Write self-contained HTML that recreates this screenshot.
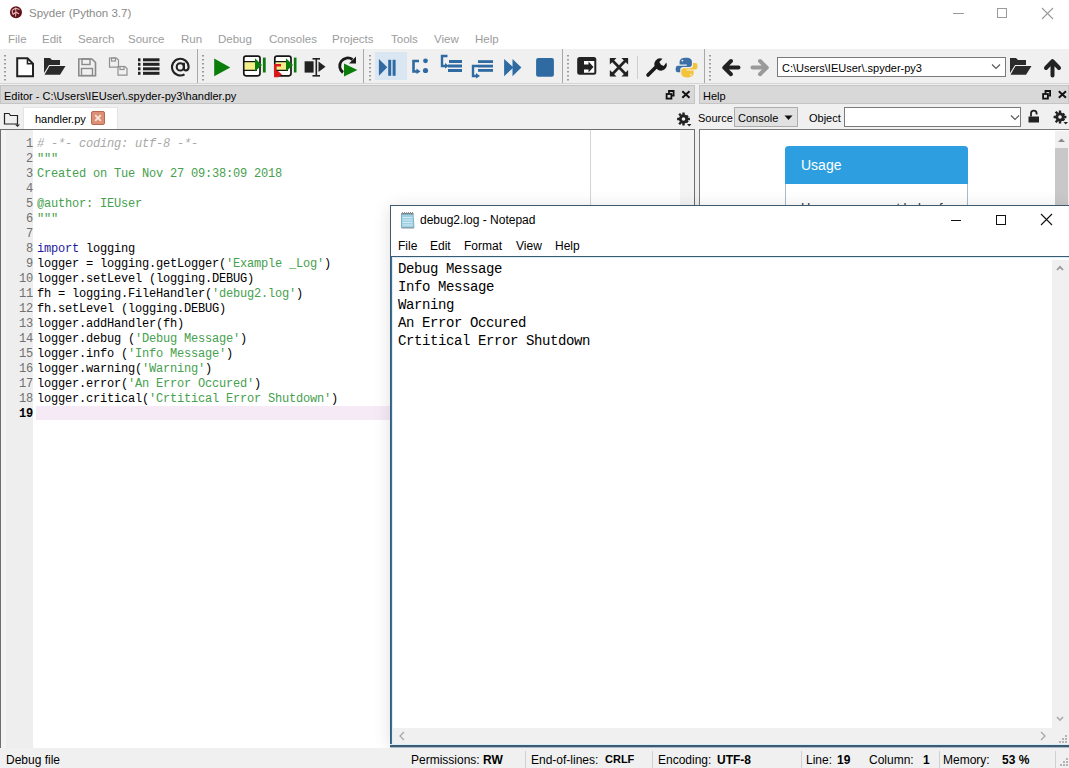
<!DOCTYPE html>
<html><head><meta charset="utf-8">
<style>
*{margin:0;padding:0;box-sizing:border-box}
html,body{width:1069px;height:768px;overflow:hidden;background:#fff;font-family:"Liberation Sans",sans-serif;font-size:11px;color:#000}
.a{position:absolute;white-space:pre}
.mono{font-family:"Liberation Mono",monospace}
.code,.nums{font-size:12px;letter-spacing:-0.2px;line-height:15px}
.nums{color:#707070}
.s{color:#46a04e}.c{color:#a8a8a8;font-style:italic}.k{color:#1c1c9c}
.np{font-size:14px;letter-spacing:-0.4px;line-height:18px}
</style></head><body>
<!-- title bar -->
<div class="a" style="left:0;top:0;width:1069px;height:28px;background:#fff"></div>
<svg class="a" style="left:9px;top:5px" width="14" height="14" viewBox="0 0 14 14"><circle cx="7" cy="7.2" r="6" fill="#5e1418"/><path d="M3 5.5 L6.5 3 L10.5 4.5 M4 9.5 L7 7 L10 9 M6.5 3 L7 7 L6.5 11.5 M3 5.5 L4 9.5" fill="none" stroke="#e9b5b8" stroke-width="1.1"/></svg>
<div class="a" style="left:29px;top:7px;font-size:11.5px;color:#8a8a8a">Spyder (Python 3.7)</div>
<div class="a" style="left:953px;top:13px;width:11px;height:1px;background:#9a9a9a"></div>
<div class="a" style="left:997px;top:8px;width:10px;height:10px;border:1px solid #9a9a9a"></div>
<svg class="a" style="left:1041px;top:7px" width="13" height="13" viewBox="0 0 13 13"><path d="M1 1L12 12M12 1L1 12" stroke="#9a9a9a" stroke-width="1.1"/></svg>

<!-- menu bar -->
<div class="a" style="left:8px;top:33px;color:#9c9c9c;font-size:11.5px">File</div>
<div class="a" style="left:42px;top:33px;color:#9c9c9c;font-size:11.5px">Edit</div>
<div class="a" style="left:78px;top:33px;color:#9c9c9c;font-size:11.5px">Search</div>
<div class="a" style="left:128px;top:33px;color:#9c9c9c;font-size:11.5px">Source</div>
<div class="a" style="left:181px;top:33px;color:#9c9c9c;font-size:11.5px">Run</div>
<div class="a" style="left:218px;top:33px;color:#9c9c9c;font-size:11.5px">Debug</div>
<div class="a" style="left:269px;top:33px;color:#9c9c9c;font-size:11.5px">Consoles</div>
<div class="a" style="left:332px;top:33px;color:#9c9c9c;font-size:11.5px">Projects</div>
<div class="a" style="left:391px;top:33px;color:#9c9c9c;font-size:11.5px">Tools</div>
<div class="a" style="left:434px;top:33px;color:#9c9c9c;font-size:11.5px">View</div>
<div class="a" style="left:475px;top:33px;color:#9c9c9c;font-size:11.5px">Help</div>

<div class="a" style="left:0;top:84px;width:1069px;height:684px;background:#f0f0f0"></div>
<!-- toolbar -->
<div class="a" style="left:0;top:49px;width:1069px;height:35px;background:#f0f0f0;border-bottom:1px solid #d4d4d4"></div>

<svg class="a" style="left:0;top:0" width="1069" height="130" viewBox="0 0 1069 130">
<!-- separators -->
<g fill="#a8a8a8"><rect x="197" y="49" width="1" height="34"/><rect x="363" y="49" width="1" height="34"/><rect x="562" y="49" width="1" height="34"/><rect x="704" y="49" width="1" height="34"/></g>
<rect x="637" y="56" width="1" height="23" fill="#cfcfcf"/>
<!-- grips -->
<g fill="#9a9a9a">
<rect x="4" y="55" width="2" height="1.5"/><rect x="4" y="59" width="2" height="1.5"/><rect x="4" y="63" width="2" height="1.5"/><rect x="4" y="67" width="2" height="1.5"/><rect x="4" y="71" width="2" height="1.5"/><rect x="4" y="75" width="2" height="1.5"/><rect x="4" y="79" width="2" height="1.5"/>
<rect x="202" y="55" width="2" height="1.5"/><rect x="202" y="59" width="2" height="1.5"/><rect x="202" y="63" width="2" height="1.5"/><rect x="202" y="67" width="2" height="1.5"/><rect x="202" y="71" width="2" height="1.5"/><rect x="202" y="75" width="2" height="1.5"/><rect x="202" y="79" width="2" height="1.5"/>
<rect x="369" y="55" width="2" height="1.5"/><rect x="369" y="59" width="2" height="1.5"/><rect x="369" y="63" width="2" height="1.5"/><rect x="369" y="67" width="2" height="1.5"/><rect x="369" y="71" width="2" height="1.5"/><rect x="369" y="75" width="2" height="1.5"/><rect x="369" y="79" width="2" height="1.5"/>
<rect x="567" y="55" width="2" height="1.5"/><rect x="567" y="59" width="2" height="1.5"/><rect x="567" y="63" width="2" height="1.5"/><rect x="567" y="67" width="2" height="1.5"/><rect x="567" y="71" width="2" height="1.5"/><rect x="567" y="75" width="2" height="1.5"/><rect x="567" y="79" width="2" height="1.5"/>
<rect x="709" y="55" width="2" height="1.5"/><rect x="709" y="59" width="2" height="1.5"/><rect x="709" y="63" width="2" height="1.5"/><rect x="709" y="67" width="2" height="1.5"/><rect x="709" y="71" width="2" height="1.5"/><rect x="709" y="75" width="2" height="1.5"/><rect x="709" y="79" width="2" height="1.5"/>
</g>
<!-- new file -->
<path d="M17.2 58.2 H27.5 L33 63.7 V76.3 H17.2 Z" fill="#fff" stroke="#222" stroke-width="2"/>
<path d="M27.5 58.2 V63.7 H33" fill="none" stroke="#222" stroke-width="1.6"/>
<!-- open folder -->
<path d="M44 58 H50 L52 60 H60 V65 H49 L44 73 Z" fill="#2a2a2a"/>
<path d="M49.5 66 H65.5 L60 74.7 H44.5 Z" fill="#2a2a2a"/>
<!-- save (grey) -->
<path d="M78.8 59 H92 L95.5 62.5 V75.7 H78.8 Z" fill="none" stroke="#8a8a8a" stroke-width="1.6"/>
<rect x="82" y="59" width="8" height="5.5" fill="none" stroke="#8a8a8a" stroke-width="1.4"/>
<rect x="81.5" y="68.5" width="11" height="7" fill="none" stroke="#8a8a8a" stroke-width="1.4"/>
<!-- save all -->
<g fill="none" stroke="#909090" stroke-width="1.2">
<path d="M109.5 58 H116.5 L118.5 60 V67.2 H109.5 Z"/><rect x="111.5" y="58" width="4" height="3"/>
<path d="M118 66.5 H125 L127 68.5 V75.2 H118 Z"/><rect x="120" y="66.5" width="4" height="3"/>
</g>
<!-- list -->
<g fill="#222"><rect x="138" y="58.3" width="2.5" height="3"/><rect x="143" y="58.3" width="16.5" height="3"/>
<rect x="138" y="62.8" width="2.5" height="3"/><rect x="143" y="62.8" width="16.5" height="3"/>
<rect x="138" y="67.3" width="2.5" height="3"/><rect x="143" y="67.3" width="16.5" height="3"/>
<rect x="138" y="71.8" width="2.5" height="3"/><rect x="143" y="71.8" width="16.5" height="3"/></g>
<!-- @ -->
<circle cx="180.3" cy="66.9" r="3.6" stroke="#222" stroke-width="2.1" fill="none"/><path d="M183.9 62.8 V68.8 C183.9 71.2 188.6 71.2 188.6 66.9 A8.3 8.3 0 1 0 184.5 74.3" stroke="#222" stroke-width="2.1" fill="none"/>
<!-- play -->
<path d="M214.2 58.6 L230.3 67.4 L214.2 76.2 Z" fill="#0a7d0a"/>
<!-- run cell -->
<rect x="243.8" y="56.1" width="16.2" height="19.7" rx="2.2" fill="#fff" stroke="#151515" stroke-width="1.7"/>
<rect x="244.8" y="62.2" width="11" height="7.8" fill="#f3ef86"/>
<path d="M243.5 61.6 H257 M243.5 70.4 H257" stroke="#151515" stroke-width="1.3"/>
<path d="M255 58.3 L262 65 L255 71.5 Z" fill="#0c7a0c"/><rect x="262.9" y="57.6" width="2.8" height="14.9" fill="#0c7a0c"/>
<!-- run cell advance -->
<rect x="274.8" y="56.1" width="16.2" height="19.7" rx="2.2" fill="#fff" stroke="#151515" stroke-width="1.7"/>
<rect x="275.8" y="62.2" width="11" height="7.8" fill="#f3ef86"/>
<path d="M274.5 61.6 H288 M274.5 70.4 H288" stroke="#151515" stroke-width="1.3"/>
<path d="M286 58.3 L293 65 L286 71.5 Z" fill="#0c7a0c"/><rect x="293.9" y="57.6" width="2.6" height="14.9" fill="#0c7a0c"/>
<path d="M274 63.9 H281 V66.4 H276.6 V72 H274 Z" fill="#d81a1a"/><path d="M274 71 H278 L282 74.5 L278 77.3 H274 Z" fill="#d81a1a"/>
<!-- run selection -->
<rect x="304.6" y="61.3" width="9" height="11.3" fill="#222"/>
<rect x="315.5" y="58.5" width="1.6" height="17.5" fill="#222"/><rect x="312.5" y="58" width="7.5" height="1.6" fill="#222"/><rect x="312.5" y="75" width="7.5" height="1.6" fill="#222"/>
<path d="M318.5 61.5 L325.5 66.8 L318.5 72 Z" fill="#222"/>
<!-- rerun -->
<path d="M343 72.5 A8 8 0 0 1 352.5 59.5" fill="none" stroke="#1a1a1a" stroke-width="2.8"/>
<path d="M356 56.5 V63.5 H349 Z" fill="#1a1a1a"/>
<path d="M344 63.6 L357.4 70 L344 76.4 Z" fill="#0a7d0a"/>
<!-- debug highlight -->
<rect x="375" y="52" width="32" height="28" fill="#dae6f2"/>
<g fill="#2f6aa3">
<path d="M378.9 58.9 L387.3 67.35 L378.9 75.8 Z"/><rect x="388.2" y="59.8" width="3" height="16"/><rect x="392.6" y="59.8" width="3" height="16"/>
<!-- step -->
<path d="M419 61 H413.5 V71.5 H417" fill="none" stroke="#2f6aa3" stroke-width="2.6"/><path d="M416.5 68.5 L420.5 71.5 L416.5 74 Z"/>
<circle cx="425.5" cy="60.8" r="2.4"/><circle cx="425.5" cy="70.5" r="2.6"/>
<!-- step into -->
<path d="M447.5 56 H442 V66 H446" fill="none" stroke="#2f6aa3" stroke-width="2.4"/><path d="M445 63 L449 66 L445 68.5 Z"/>
<rect x="449" y="60" width="13" height="3"/><rect x="448" y="64.5" width="14" height="3"/><rect x="448" y="69" width="14" height="3"/>
<!-- step return -->
<rect x="478" y="60.2" width="15" height="2.8"/><rect x="478" y="64.7" width="15" height="2.8"/><rect x="478" y="69" width="15" height="2.8"/>
<path d="M478.5 66 H473 V76 H477" fill="none" stroke="#2f6aa3" stroke-width="2.4"/><path d="M476 73 L480 76 L476 78.5 Z"/>
<!-- continue -->
<path d="M504.1 58.9 L513.5 67.5 L504.1 76.2 Z"/><path d="M512.5 58.9 L521.4 67.5 L512.5 76.2 Z"/>
<!-- stop -->
<rect x="536.1" y="58" width="17.8" height="18.7" rx="2"/>
</g>
<!-- maximize pane -->
<rect x="578.2" y="58.1" width="17.1" height="15.6" rx="1.5" fill="#fff" stroke="#222" stroke-width="2"/>
<rect x="578" y="58" width="17.5" height="3" fill="#222"/>
<rect x="578" y="61" width="6" height="13" fill="#222"/>
<path d="M583 64.5 H588.5 V61.5 L593.5 67 L588.5 72.5 V69.5 H583 Z" fill="#222"/>
<!-- fullscreen -->
<g stroke="#222" stroke-width="2.6" fill="none"><path d="M612 60 L626 74.5 M626 60 L612 74.5"/></g>
<g fill="#222"><path d="M609.8 57.9 H616.5 L609.8 64.6 Z"/><path d="M628.1 57.9 H621.4 L628.1 64.6 Z"/><path d="M609.8 76.6 H616.5 L609.8 69.9 Z"/><path d="M628.1 76.6 H621.4 L628.1 69.9 Z"/></g>
<!-- wrench -->
<path d="M648 75 L657 66" stroke="#1a1a1a" stroke-width="3.6" stroke-linecap="round"/>
<path d="M655.5 67.5 A5.8 5.8 0 0 1 662.5 58.8 L659.3 62 L661 64.7 L663.8 66 L666.3 62.6 A5.8 5.8 0 0 1 657.8 69.7 Z" fill="#1a1a1a"/>
<!-- python -->
<path id="py1" d="M686.5 57.8 C681.8 57.8 679.6 59.3 679.6 62 V64.6 H686.8 V65.8 H677.6 C675.2 65.8 674.8 72.3 677.6 72.3 H680.2 V69.6 C680.2 67.9 681.4 66.9 683.2 66.9 H689.4 C690.8 66.9 691.9 65.9 691.9 64.4 V61.6 C691.9 59.2 689.6 57.8 686.5 57.8 Z" fill="#3b6fa6"/>
<circle cx="682.4" cy="60.6" r="0.9" fill="#f0f0f0"/>
<path d="M686.5 57.8 C681.8 57.8 679.6 59.3 679.6 62 V64.6 H686.8 V65.8 H677.6 C675.2 65.8 674.8 72.3 677.6 72.3 H680.2 V69.6 C680.2 67.9 681.4 66.9 683.2 66.9 H689.4 C690.8 66.9 691.9 65.9 691.9 64.4 V61.6 C691.9 59.2 689.6 57.8 686.5 57.8 Z" fill="#f3c43a" transform="rotate(180 686.6 67.6)"/>
<circle cx="690.8" cy="74.6" r="0.9" fill="#f0f0f0"/>
<!-- back -->
<path d="M738.5 67.6 H725 M731 61 L724.2 67.6 L731 74.2" fill="none" stroke="#222" stroke-width="4" stroke-linecap="round" stroke-linejoin="round"/>
<!-- forward -->
<path d="M752.5 67.6 H766 M760 61 L766.8 67.6 L760 74.2" fill="none" stroke="#9a9a9a" stroke-width="4" stroke-linecap="round" stroke-linejoin="round"/>
<!-- folder2 -->
<path d="M1010 58 H1016 L1018 60 H1026 V65 H1015 L1010 73 Z" fill="#2a2a2a"/>
<path d="M1015.5 66 H1031.5 L1026 74.7 H1010.5 Z" fill="#2a2a2a"/>
<!-- up -->
<path d="M1052.5 75.5 V62 M1046 68 L1052.5 61.2 L1059 68" fill="none" stroke="#222" stroke-width="4" stroke-linecap="round" stroke-linejoin="round"/>
</svg>
<div class="a" style="left:777px;top:57px;width:229px;height:20px;background:#fff;border:1px solid #7a7a7a"></div>
<div class="a" style="left:782px;top:62px;font-size:11px">C:\Users\IEUser\.spyder-py3</div>
<svg class="a" style="left:991px;top:63px" width="10" height="7" viewBox="0 0 10 7"><path d="M1 1.5 L5 5.5 L9 1.5" fill="none" stroke="#555" stroke-width="1.1"/></svg>
<!-- dock headers -->
<div class="a" style="left:0;top:85px;width:695px;height:19px;background:#d8d8d8;border:1px solid #c4c4c4"></div>
<div class="a" style="left:4px;top:90px;color:#000">Editor - C:\Users\IEUser\.spyder-py3\handler.py</div>
<div class="a" style="left:699px;top:85px;width:370px;height:19px;background:#d8d8d8;border:1px solid #c4c4c4"></div>
<div class="a" style="left:703px;top:90px;color:#000">Help</div>

<!-- tab bar -->
<div class="a" style="left:0;top:104px;width:699px;height:26px;background:#f0f0f0"></div>
<div class="a" style="left:23px;top:107px;width:95px;height:23px;background:#fff;border:1px solid #e4e4e4;border-bottom:none"></div>
<div class="a" style="left:35px;top:113px;color:#000;font-size:11px">handler.py</div>

<!-- editor -->
<div class="a" style="left:0;top:129px;width:695px;height:620px;border:1px solid #6e6e6e;background:#fff"></div>
<div class="a" style="left:1px;top:130px;width:32px;height:618px;background:#eeeeee"></div>
<div class="a" style="left:1px;top:130px;width:5px;height:618px;background:#f3f3f3"></div>

<div class="a" style="left:36px;top:406px;width:644px;height:14px;background:#f6eaf7"></div>
<div class="a" style="left:590px;top:130px;width:1px;height:618px;background:#d4d4d4"></div>
<div class="a mono nums" style="left:1px;top:137px;width:32px;text-align:right">1
2
3
4
5
6
7
8
9
10
11
12
13
14
15
16
17
18
<b style="color:#000">19</b></div>
<div class="a mono code" style="left:37px;top:137px"><span class="c"># -*- coding: utf-8 -*-</span>
<span class="s">"""</span>
<span class="s">Created on Tue Nov 27 09:38:09 2018</span>

<span class="s">@author: IEUser</span>
<span class="s">"""</span>

<span class="k">import</span> logging
logger = logging.getLogger(<span class="s">'Example _Log'</span>)
logger.setLevel (logging.DEBUG)
fh = logging.FileHandler(<span class="s">'debug2.log'</span>)
fh.setLevel (logging.DEBUG)
logger.addHandler(fh)
logger.debug (<span class="s">'Debug Message'</span>)
logger.info (<span class="s">'Info Message'</span>)
logger.warning(<span class="s">'Warning'</span>)
logger.error(<span class="s">'An Error Occured'</span>)
logger.critical(<span class="s">'Crtitical Error Shutdown'</span>)
</div>
<div class="a" style="left:680px;top:130px;width:14px;height:618px;background:#f4f4f4"></div>
<!-- help pane -->
<div class="a" style="left:699px;top:104px;width:370px;height:26px;background:#f0f0f0"></div>
<div class="a" style="left:699px;top:129px;width:370px;height:620px;border:1px solid #7a7a7a;border-right:none;background:#fff"></div>

<svg class="a" style="left:0;top:84px" width="1069" height="46" viewBox="0 84 1069 46">
<!-- folder icon tabbar -->
<path d="M4.5 113.5 H9 L10.5 115.5 H17.5 V124 H4.5 Z" fill="none" stroke="#222" stroke-width="1.2"/>
<path d="M15 124.5 H20 L17.5 127 Z" fill="#222"/>
<!-- close tab -->
<rect x="91.5" y="111.5" width="13" height="13" rx="1.5" fill="#dc8f74" stroke="#b86a50" stroke-width="1"/>
<path d="M95.2 115.2 L100.8 120.8 M100.8 115.2 L95.2 120.8" stroke="#fae6dc" stroke-width="1.7"/>
<!-- undock / close editor header -->
<g fill="none" stroke="#111" stroke-width="1.8">
<rect x="666.6" y="94" width="4.8" height="4.6"/><path d="M669 93.5 V91 H673.6 V95.6 H671.8"/>
<path d="M682.3 91.3 L689.5 97.7 M689.5 91.3 L682.3 97.7" stroke-width="2"/>
<rect x="1043.1" y="94" width="4.8" height="4.6"/><path d="M1045.5 93.5 V91 H1050.1 V95.6 H1048.3"/>
<path d="M1058.8 91.3 L1066 97.7 M1066 91.3 L1058.8 97.7" stroke-width="2"/>
</g>
<!-- gears -->
<g fill="#222">
<circle cx="683.5" cy="119" r="4.6"/>
<path d="M682.3 112.6 h2.4 v2.6 h-2.4 Z M682.3 122.8 h2.4 v2.6 h-2.4 Z M677.1 117.8 v2.4 h2.6 v-2.4 Z M687.3 117.8 v2.4 h2.6 v-2.4 Z"/>
<path d="M678.3 114.6 l1.7-1.7 l1.8 1.8 l-1.7 1.7 Z M685.2 121.5 l1.7-1.7 l1.8 1.8 l-1.7 1.7 Z M678.3 123.4 l1.7 1.7 l1.8-1.8 l-1.7-1.7 Z M685.2 116.5 l1.7 1.7 l1.8-1.8 l-1.7-1.7 Z"/>
<path d="M687 124 H691.5 L689.2 126.5 Z"/>
</g>
<circle cx="683.5" cy="119" r="1.8" fill="#f0f0f0"/>
<g fill="#222" transform="translate(376.5 -2)">
<circle cx="683.5" cy="119" r="4.6"/>
<path d="M682.3 112.6 h2.4 v2.6 h-2.4 Z M682.3 122.8 h2.4 v2.6 h-2.4 Z M677.1 117.8 v2.4 h2.6 v-2.4 Z M687.3 117.8 v2.4 h2.6 v-2.4 Z"/>
<path d="M678.3 114.6 l1.7-1.7 l1.8 1.8 l-1.7 1.7 Z M685.2 121.5 l1.7-1.7 l1.8 1.8 l-1.7 1.7 Z M678.3 123.4 l1.7 1.7 l1.8-1.8 l-1.7-1.7 Z M685.2 116.5 l1.7 1.7 l1.8-1.8 l-1.7-1.7 Z"/>
<path d="M687 124 H691.5 L689.2 126.5 Z"/>
</g>
<circle cx="1060" cy="117" r="1.8" fill="#f0f0f0"/>
<!-- lock -->
<rect x="1028.5" y="116.5" width="10.5" height="6" fill="#222"/>
<path d="M1031 116.5 V113.5 A2.8 2.8 0 0 1 1036.6 113.5 V114.5" fill="none" stroke="#222" stroke-width="1.8"/>
</svg>
<div class="a" style="left:698px;top:112px;font-size:11px">Source</div>
<div class="a" style="left:734px;top:107px;width:64px;height:20px;background:#e1e1e1;border:1px solid #adadad"></div>
<div class="a" style="left:738px;top:112px;font-size:11px">Console</div>
<svg class="a" style="left:784px;top:115px" width="9" height="6" viewBox="0 0 9 6"><path d="M0.5 0.5 H8.5 L4.5 5 Z" fill="#111"/></svg>
<div class="a" style="left:809px;top:112px;font-size:11px">Object</div>
<div class="a" style="left:844px;top:107px;width:177px;height:20px;background:#fff;border:1px solid #7a7a7a"></div>
<svg class="a" style="left:1010px;top:114px" width="10" height="7" viewBox="0 0 10 7"><path d="M1 1.5 L5 5.5 L9 1.5" fill="none" stroke="#555" stroke-width="1.1"/></svg>
<!-- help content -->
<div class="a" style="left:785px;top:146px;width:183px;height:80px;border:1px solid #a9bccb;border-top:none;border-radius:4px 4px 0 0;background:#fff"></div>
<div class="a" style="left:785px;top:146px;width:183px;height:38px;background:#2d9fe0;border-radius:4px 4px 0 0"></div>
<div class="a" style="left:801px;top:157px;font-size:14px;color:#fff">Usage</div>
<div class="a" style="left:801px;top:200px;font-size:13px;color:#333">Here you can get help of</div>
<div class="a" style="left:1055px;top:131px;width:14px;height:120px;background:#f0f0f0"></div>
<div class="a" style="left:1055px;top:148px;width:13px;height:100px;background:#c8c8c8"></div>
<svg class="a" style="left:1057px;top:137px" width="9" height="6" viewBox="0 0 9 6"><path d="M1 5 L4.5 1.5 L8 5 Z" fill="#8a8a8a"/></svg>
<!-- notepad -->
<div class="a" style="left:390px;top:205px;width:679px;height:541px;background:#fff;border:1px solid #3d5a70;border-right:none;box-shadow:0 2px 16px rgba(0,0,0,0.13)"></div>

<div class="a mono np" style="left:398px;top:260px">Debug Message
Info Message
Warning
An Error Occured
Crtitical Error Shutdown</div>
<div class="a" style="left:391px;top:206px;width:678px;height:50px;background:#fff"></div>
<svg class="a" style="left:399px;top:211px" width="17" height="18" viewBox="0 0 17 18">
<path d="M2.5 3 H14 L15 16.5 H2.5 Z" fill="#9fd0e2" stroke="#6aa3bb" stroke-width="0.8"/>
<path d="M3.5 6.5 H13.5 M3.5 9 H13.5 M3.5 11.5 H13.5 M3.5 14 H13.5" stroke="#d6eef6" stroke-width="0.9"/>
<path d="M2.5 3.2 L3.5 1.5 L4.5 3.2 L5.5 1.5 L6.5 3.2 L7.5 1.5 L8.5 3.2 L9.5 1.5 L10.5 3.2 L11.5 1.5 L12.5 3.2 L13.5 1.5 L14.5 3.2" fill="none" stroke="#555" stroke-width="0.8"/>
<path d="M2.5 17 H15" stroke="#8a9aa2" stroke-width="1"/>
</svg>
<div class="a" style="left:420px;top:213px;font-size:12px;color:#000">debug2.log - Notepad</div>
<div class="a" style="left:951px;top:220px;width:10px;height:1px;background:#111"></div>
<div class="a" style="left:996px;top:215px;width:10px;height:10px;border:1px solid #111"></div>
<svg class="a" style="left:1040px;top:213px" width="13" height="13" viewBox="0 0 13 13"><path d="M1 1L12 12M12 1L1 12" stroke="#111" stroke-width="1.1"/></svg>
<div class="a" style="left:398px;top:239px;font-size:12px">File</div>
<div class="a" style="left:430px;top:239px;font-size:12px">Edit</div>
<div class="a" style="left:464px;top:239px;font-size:12px">Format</div>
<div class="a" style="left:516px;top:239px;font-size:12px">View</div>
<div class="a" style="left:555px;top:239px;font-size:12px">Help</div>
<div class="a" style="left:390px;top:256px;width:679px;height:1px;background:#3d5a70"></div>
<div class="a" style="left:391px;top:257px;width:678px;height:1px;background:#d6eef8"></div>
<div class="a" style="left:391px;top:257px;width:1px;height:488px;background:#3a6f9a"></div>
<div class="a" style="left:392px;top:258px;width:1px;height:487px;background:#d6eef8"></div>
<!-- scrollbars -->
<div class="a" style="left:1052px;top:260px;width:17px;height:468px;background:#f0f0f0"></div>
<svg class="a" style="left:1056px;top:265px" width="8" height="6" viewBox="0 0 8 6"><path d="M1 5 L4 1.8 L7 5" fill="none" stroke="#9a9a9a" stroke-width="1.8"/></svg>
<svg class="a" style="left:1056px;top:716px" width="8" height="6" viewBox="0 0 8 6"><path d="M1 1 L4 4.2 L7 1" fill="none" stroke="#a8a8a8" stroke-width="1.6"/></svg>
<div class="a" style="left:393px;top:728px;width:659px;height:17px;background:#f0f0f0"></div>
<svg class="a" style="left:399px;top:731px" width="6" height="10" viewBox="0 0 6 10"><path d="M5 1 L1 5 L5 9" fill="none" stroke="#a8a8a8" stroke-width="1.3"/></svg>
<svg class="a" style="left:1040px;top:731px" width="6" height="10" viewBox="0 0 6 10"><path d="M1 1 L5 5 L1 9" fill="none" stroke="#a8a8a8" stroke-width="1.3"/></svg>
<div class="a" style="left:1052px;top:728px;width:17px;height:17px;background:#f0f0f0"></div>
<div class="a" style="left:390px;top:744px;width:679px;height:1px;background:#d6eef8"></div>
<div class="a" style="left:390px;top:745px;width:679px;height:2px;background:#3d5a70"></div>
<div class="a" style="left:390px;top:747px;width:679px;height:1px;background:#a9bccb"></div>
<!-- status bar -->
<div class="a" style="left:0;top:748px;width:1069px;height:20px;background:#f0f0f0"></div>
<div class="a" style="left:6px;top:753px;font-size:12px">Debug file</div>
<div class="a" style="left:411px;top:753px;font-size:12px">Permissions: </div><div class="a" style="left:483px;top:753px;font-size:12px;font-weight:bold">RW</div>
<div class="a" style="left:525px;top:751px;width:1px;height:17px;background:#d0d0d0"></div>
<div class="a" style="left:531px;top:753px;font-size:12px">End-of-lines: </div><div class="a" style="left:605px;top:753px;font-size:11px;font-weight:bold">CRLF</div>
<div class="a" style="left:652px;top:751px;width:1px;height:17px;background:#d0d0d0"></div>
<div class="a" style="left:658px;top:753px;font-size:12px">Encoding: </div><div class="a" style="left:717px;top:753px;font-size:12px;font-weight:bold">UTF-8</div>
<div class="a" style="left:801px;top:751px;width:1px;height:17px;background:#d0d0d0"></div>
<div class="a" style="left:806px;top:753px;font-size:12px">Line: </div><div class="a" style="left:837px;top:753px;font-size:12px;font-weight:bold">19</div>
<div class="a" style="left:869px;top:753px;font-size:12px">Column: </div><div class="a" style="left:923px;top:753px;font-size:12px;font-weight:bold">1</div>
<div class="a" style="left:939px;top:751px;width:1px;height:17px;background:#d0d0d0"></div>
<div class="a" style="left:943px;top:753px;font-size:12px">Memory: </div><div class="a" style="left:1002px;top:753px;font-size:12px;font-weight:bold">53 %</div>
<div class="a" style="left:1055px;top:751px;width:1px;height:17px;background:#d0d0d0"></div>
<svg class="a" style="left:1056px;top:732px" width="12" height="12" viewBox="0 0 12 12"><g fill="#b4b4b4"><rect x="9" y="3" width="2" height="2"/><rect x="6" y="6" width="2" height="2"/><rect x="9" y="6" width="2" height="2"/><rect x="3" y="9" width="2" height="2"/><rect x="6" y="9" width="2" height="2"/><rect x="9" y="9" width="2" height="2"/></g></svg>
<svg class="a" style="left:1057px;top:755px" width="12" height="12" viewBox="0 0 12 12"><g fill="#b4b4b4"><rect x="9" y="3" width="2" height="2"/><rect x="6" y="6" width="2" height="2"/><rect x="9" y="6" width="2" height="2"/><rect x="3" y="9" width="2" height="2"/><rect x="6" y="9" width="2" height="2"/><rect x="9" y="9" width="2" height="2"/></g></svg>
</body></html>
